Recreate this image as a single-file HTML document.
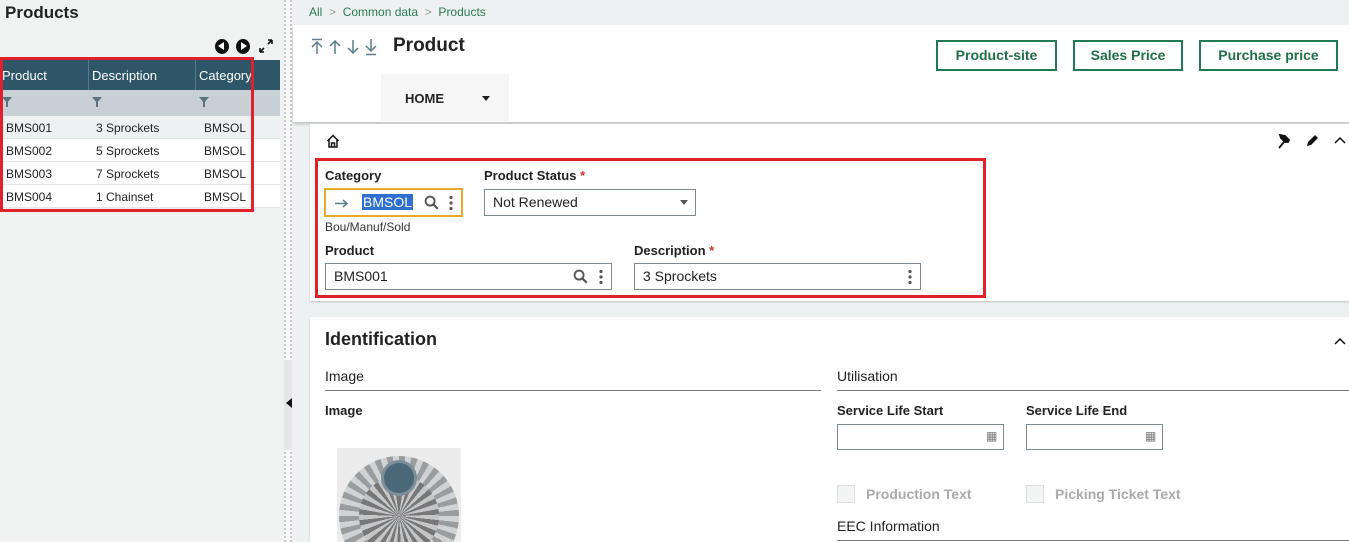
<!DOCTYPE html>
<html><head><meta charset="utf-8"><style>
*{box-sizing:border-box;margin:0;padding:0}
html,body{width:1349px;height:542px;overflow:hidden}
body{font-family:"Liberation Sans",sans-serif;background:#eef1f1;position:relative;color:#222}
.a{position:absolute}
.lbl{font-size:13px;font-weight:bold;color:#222}
.inp{position:absolute;border:1px solid #7d8a92;background:#fff;height:27px;font-size:14px;padding:4px 8px}
.btn{position:absolute;top:40px;height:31px;border:2px solid #1f7a55;color:#1f6e4c;font-weight:bold;font-size:14px;text-align:center;line-height:27px;background:#fff}
.row{position:absolute;left:0;width:280px;height:23px;font-size:12px;border-bottom:1px solid #e4e7e8;background:#fff}
.row span{position:absolute;top:5px}
.fun{position:absolute;top:7px;width:0;height:0;border-left:5px solid transparent;border-right:5px solid transparent;border-top:6px solid #5c7380}
.fun:after{content:"";position:absolute;left:-1px;top:-1px;width:2px;height:5px;background:#5c7380}
</style></head><body>
<svg width="0" height="0" style="position:absolute"><defs>
<symbol id="mag" viewBox="0 0 16 16"><circle cx="6.5" cy="6.5" r="4.8" fill="none" stroke="#555" stroke-width="2"/><path d="M10 10l4 4" stroke="#555" stroke-width="2.4" stroke-linecap="round"/></symbol>
<symbol id="dots" viewBox="0 0 4 16"><circle cx="2" cy="2.5" r="1.6" fill="#555"/><circle cx="2" cy="8" r="1.6" fill="#555"/><circle cx="2" cy="13.5" r="1.6" fill="#555"/></symbol>
</defs></svg>
<!-- left panel -->
<div class="a" style="left:0;top:0;width:283px;height:542px;background:#f0f2f2"></div>
<div class="a" style="left:5px;top:3px;font-size:17px;font-weight:bold">Products</div>
<div class="a" style="left:215px;top:39px;width:14px;height:15px;border-radius:50%;background:#111"></div>
<div class="a" style="left:236px;top:39px;width:14px;height:15px;border-radius:50%;background:#111"></div>
<div class="a" style="left:218px;top:42px;border:4.5px solid transparent;border-right:6px solid #fff;border-left:0"></div>
<div class="a" style="left:241px;top:42px;border:4.5px solid transparent;border-left:6px solid #fff;border-right:0"></div>
<svg class="a" style="left:259px;top:39px" width="14" height="14" viewBox="0 0 14 14"><path d="M1 13l4-4M1 13v-4M1 13h4M13 1l-4 4M13 1v4M13 1h-4" stroke="#111" stroke-width="1.6" fill="none"/></svg>
<div class="a" style="left:0;top:60px;width:280px;height:30px;background:#2e5568;color:#fff;font-size:13px">
<span class="a" style="left:2px;top:8px">Product</span><span class="a" style="left:88px;top:0;width:1px;height:30px;background:#5a7888"></span>
<span class="a" style="left:92px;top:8px">Description</span><span class="a" style="left:195px;top:0;width:1px;height:30px;background:#5a7888"></span>
<span class="a" style="left:199px;top:8px;width:54px;overflow:hidden;white-space:nowrap">Category</span></div>
<div class="a" style="left:0;top:90px;width:280px;height:26px;background:#c8d0d5">
<span class="fun" style="left:2px"></span><span class="fun" style="left:92px"></span><span class="fun" style="left:199px"></span></div>
<div class="row" style="top:116px;background:#eef1f2"><span style="left:6px">BMS001</span><span style="left:96px">3 Sprockets</span><span style="left:204px">BMSOL</span></div>
<div class="row" style="top:139px"><span style="left:6px">BMS002</span><span style="left:96px">5 Sprockets</span><span style="left:204px">BMSOL</span></div>
<div class="row" style="top:162px"><span style="left:6px">BMS003</span><span style="left:96px">7 Sprockets</span><span style="left:204px">BMSOL</span></div>
<div class="row" style="top:185px"><span style="left:6px">BMS004</span><span style="left:96px">1 Chainset</span><span style="left:204px">BMSOL</span></div>
<div class="a" style="left:0;top:57px;width:254px;height:155px;border:3px solid #e0202a"></div>
<!-- divider -->
<div class="a" style="left:284px;top:0;width:8px;height:542px;background:#f7f7f7;border-left:2px dotted #c8c8c8;border-right:2px dotted #c8c8c8"></div>
<div class="a" style="left:284px;top:360px;width:8px;height:90px;background:#e6e6e6"></div>
<div class="a" style="left:286px;top:398px;border:5px solid transparent;border-right:6px solid #111;border-left:0"></div>
<!-- breadcrumb -->
<div class="a" style="left:293px;top:0;width:1056px;height:25px;background:#eef1f1;font-size:12px;color:#2a7a56;padding:5px 16px">All &nbsp;<span style="color:#999">&gt;</span>&nbsp; Common data &nbsp;<span style="color:#999">&gt;</span>&nbsp; Products</div>
<!-- header -->
<div class="a" style="left:293px;top:25px;width:1056px;height:97px;background:#fff;box-shadow:0 2px 3px rgba(0,0,0,.2)"></div>
<svg class="a" style="left:311px;top:38px" width="68" height="18" viewBox="0 0 68 18" fill="none" stroke="#5b7f8a" stroke-width="1.5"><path d="M6 16V4M1 9l5-5 5 5M1 1.5h10"/><path d="M24 16V3M19 8l5-5 5 5"/><path d="M42 2v13M37 10l5 5 5-5"/><path d="M60 1v12M55 8l5 5 5-5M55 16.5h10"/></svg>
<div class="a" style="left:393px;top:35px;font-size:19px;font-weight:bold">Product</div>
<div class="a" style="left:381px;top:74px;width:128px;height:47px;background:#f6f6f6;font-size:13px;font-weight:bold"><span class="a" style="left:24px;top:17px">HOME</span><span class="a" style="left:101px;top:22px;border:4px solid transparent;border-top:5px solid #222;border-bottom:0"></span></div>
<div class="btn" style="left:936px;width:121px">Product-site</div>
<div class="btn" style="left:1073px;width:110px">Sales Price</div>
<div class="btn" style="left:1199px;width:139px">Purchase price</div>
<!-- card 1 -->
<div class="a" style="left:310px;top:124px;width:1039px;height:177px;background:#fff;box-shadow:0 1px 2px rgba(0,0,0,.2)"></div>
<svg class="a" style="left:326px;top:134px" width="14" height="14" viewBox="0 0 14 14" fill="none" stroke="#111" stroke-width="1.5"><path d="M1.5 7L7 1.5 12.5 7M3 5.5V13h8V5.5M5.5 13V9h3v4"/></svg>
<svg class="a" style="left:1277px;top:133px" width="16" height="16" viewBox="0 0 16 16"><path d="M3 2l5 1 4 4-1 2-3 0-4-4z M7 9l-5 6" stroke="#111" stroke-width="1.8" fill="#111"/></svg>
<svg class="a" style="left:1305px;top:133px" width="15" height="15" viewBox="0 0 15 15"><path d="M2 13l1-4 7-7 3 3-7 7z" fill="#111"/></svg>
<svg class="a" style="left:1334px;top:136px" width="12" height="8" viewBox="0 0 12 8"><path d="M1 7l5-5 5 5" stroke="#111" stroke-width="1.5" fill="none"/></svg>
<div class="a lbl" style="left:325px;top:168px">Category</div>
<div class="a lbl" style="left:484px;top:168px">Product Status <span style="color:#d0303a">*</span></div>
<div class="inp" style="left:324px;top:188px;width:139px;height:29px;border:2px solid #e6a92a"><svg class="a" style="left:9px;top:9px" width="14" height="9" viewBox="0 0 14 9"><path d="M0 4.5h12M8 1l4 3.5L8 8" stroke="#5b7f8a" stroke-width="1.5" fill="none"/></svg><span class="a" style="left:36px;top:4px;background:#2f6fd2;color:#fff;padding:0 1px">BMSOL</span><svg class="a" style="left:98px;top:5px" width="15" height="15"><use href="#mag"/></svg><svg class="a" style="left:123px;top:5px" width="4" height="16"><use href="#dots"/></svg></div>
<div class="inp" style="left:484px;top:189px;width:212px">Not Renewed<span class="a" style="left:195px;top:10px;border:4px solid transparent;border-top:5px solid #555;border-bottom:0"></span></div>
<div class="a" style="left:325px;top:220px;font-size:12px;color:#333">Bou/Manuf/Sold</div>
<div class="a lbl" style="left:325px;top:243px">Product</div>
<div class="a lbl" style="left:634px;top:243px">Description <span style="color:#d0303a">*</span></div>
<div class="inp" style="left:325px;top:263px;width:287px">BMS001<svg class="a" style="left:247px;top:5px" width="15" height="15"><use href="#mag"/></svg><svg class="a" style="left:273px;top:5px" width="4" height="16"><use href="#dots"/></svg></div>
<div class="inp" style="left:634px;top:263px;width:287px">3 Sprockets<svg class="a" style="left:273px;top:5px" width="4" height="16"><use href="#dots"/></svg></div>
<div class="a" style="left:315px;top:158px;width:671px;height:140px;border:3px solid #e0202a"></div>
<!-- card 2 -->
<div class="a" style="left:310px;top:317px;width:1039px;height:225px;background:#fff;box-shadow:0 1px 2px rgba(0,0,0,.15)"></div>
<div class="a" style="left:325px;top:329px;font-size:18px;font-weight:bold">Identification</div>
<svg class="a" style="left:1334px;top:337px" width="12" height="8" viewBox="0 0 12 8"><path d="M1 7l5-5 5 5" stroke="#111" stroke-width="1.5" fill="none"/></svg>
<div class="a" style="left:325px;top:368px;font-size:14px">Image</div>
<div class="a" style="left:325px;top:390px;width:496px;height:1px;background:#777"></div>
<div class="a lbl" style="left:325px;top:403px">Image</div>
<div class="a" style="left:337px;top:448px;width:124px;height:94px;background:#ececec;overflow:hidden">
<div class="a" style="left:2px;top:8px;width:120px;height:120px;border-radius:50%;background:repeating-conic-gradient(#9a9da0 0 6deg,#d0d2d4 6deg 12deg)"></div>
<div class="a" style="left:22px;top:28px;width:80px;height:80px;border-radius:50%;background:repeating-conic-gradient(#777 0 8deg,#c4c6c8 8deg 16deg)"></div>
<div class="a" style="left:44px;top:12px;width:36px;height:36px;border-radius:50%;background:#4a6878;border:3px solid #7c8e98"></div></div>
<div class="a" style="left:837px;top:368px;font-size:14px">Utilisation</div>
<div class="a" style="left:837px;top:390px;width:512px;height:1px;background:#777"></div>
<div class="a lbl" style="left:837px;top:403px">Service Life Start</div>
<div class="a lbl" style="left:1026px;top:403px">Service Life End</div>
<div class="inp" style="left:837px;top:424px;width:167px;height:26px"><span class="a" style="left:148px;top:4px;font-size:12px;color:#777">▦</span></div>
<div class="inp" style="left:1026px;top:424px;width:137px;height:26px"><span class="a" style="left:118px;top:4px;font-size:12px;color:#777">▦</span></div>
<div class="a" style="left:837px;top:485px;width:18px;height:18px;border:1px solid #ddd;background:#f3f4f4"></div>
<div class="a" style="left:866px;top:486px;font-size:14px;font-weight:bold;color:#aaa">Production Text</div>
<div class="a" style="left:1026px;top:485px;width:18px;height:18px;border:1px solid #ddd;background:#f3f4f4"></div>
<div class="a" style="left:1055px;top:486px;font-size:14px;font-weight:bold;color:#aaa">Picking Ticket Text</div>
<div class="a" style="left:837px;top:518px;font-size:14px">EEC Information</div>
<div class="a" style="left:837px;top:540px;width:512px;height:1px;background:#777"></div>
</body></html>
